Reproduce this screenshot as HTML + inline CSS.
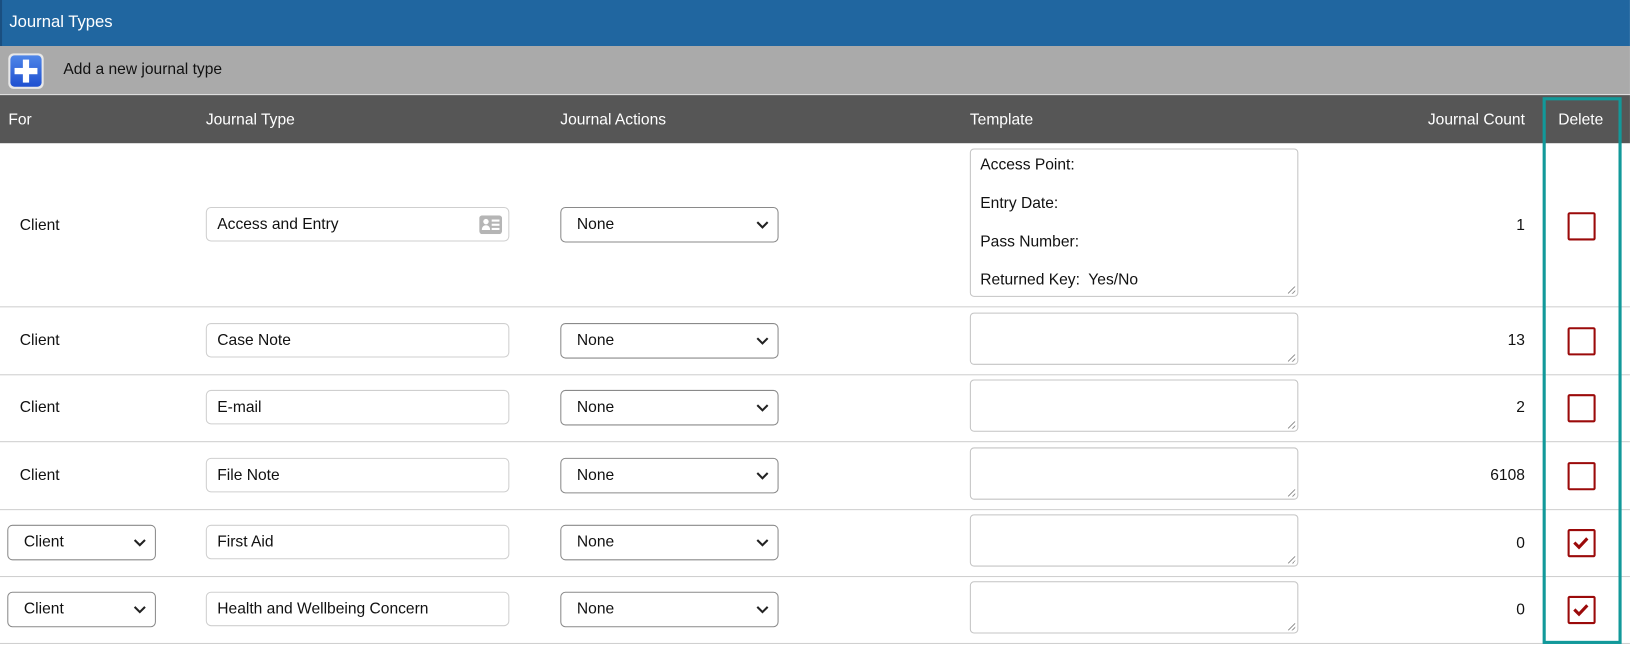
<!DOCTYPE html>
<html><head><meta charset="utf-8"><style>
html,body{margin:0;padding:0;width:1630px;height:645px;overflow:hidden;background:#fff;font-family:"Liberation Sans",Arial,sans-serif;}
#w{position:absolute;left:0;top:0;width:1568px;height:617px;transform-origin:0 0;transform:scale(1.0395,1.0454);}
.a{position:absolute;}
.t{font-size:15px;color:#111;}
.hd{color:#fff;font-size:15px;}
.inp{position:absolute;left:198px;width:292px;height:33px;border:1px solid #cfcfcf;border-radius:5px;box-sizing:border-box;font-size:15px;line-height:31px;padding-left:10px;color:#111;}
.sel{position:absolute;height:34px;border:1px solid #8a8a8a;border-radius:5px;box-sizing:border-box;font-size:15px;line-height:32px;padding-left:15px;color:#111;}
.sel svg{position:absolute;right:8px;top:12px;}
.ta{position:absolute;left:933px;width:316px;border:1px solid #c4c4c4;border-radius:4px;box-sizing:border-box;}
.ta:after{content:"";position:absolute;right:2px;bottom:2px;width:7px;height:7px;background:linear-gradient(135deg,transparent 45%,#999 45%,#999 55%,transparent 55%,transparent 75%,#999 75%,#999 85%,transparent 85%);}
.line{position:absolute;left:0;width:1568px;height:1px;background:#cfcfcf;}
.cnt{position:absolute;right:101px;font-size:15px;color:#111;}
.cb{position:absolute;left:1508px;width:27px;height:27px;border:2.5px solid #9b0a0a;border-radius:2px;box-sizing:border-box;}
</style></head><body><div id="w">
<div class="a" style="left:0;top:0;width:1568px;height:44px;background:#2066a0;"></div>
<div class="a" style="left:0;top:0;width:2px;height:44px;background:#1a4f80;"></div>
<div class="a hd" style="left:9px;top:13px;font-size:16px;">Journal Types</div>
<div class="a" style="left:0;top:44px;width:1568px;height:46px;background:#aaaaaa;"></div>
<div class="a" style="left:8px;top:51px;width:34px;height:34px;border-radius:5px;background:#e8e8e8;"></div>
<div class="a" style="left:10px;top:53px;width:30px;height:30px;border-radius:4px;background:linear-gradient(#4f86e8,#1e4fd0);"></div>
<div class="a" style="left:22px;top:57px;width:6px;height:22px;background:#fff;"></div>
<div class="a" style="left:14px;top:65px;width:22px;height:6px;background:#fff;"></div>
<div class="a t" style="left:61px;top:58px;">Add a new journal type</div>
<div class="a" style="left:0;top:90px;width:1568px;height:1px;background:#ddd;"></div>
<div class="a" style="left:0;top:91px;width:1568px;height:46px;background:#565656;"></div>
<div class="a hd" style="left:8px;top:106px;">For</div>
<div class="a hd" style="left:198px;top:106px;">Journal Type</div>
<div class="a hd" style="left:539px;top:106px;">Journal Actions</div>
<div class="a hd" style="left:933px;top:106px;">Template</div>
<div class="a hd" style="right:101px;top:106px;">Journal Count</div>
<div class="a hd" style="left:1499px;top:106px;">Delete</div>

<!-- row 1 -->
<div class="a t" style="left:19px;top:207px;">Client</div>
<div class="inp" style="top:198px;">Access and Entry
<svg style="position:absolute;right:6px;top:7px" width="22" height="18" viewBox="0 0 22 18"><rect width="22" height="18" rx="3" fill="#b5b5b5"/><circle cx="6.5" cy="6" r="2.6" fill="#fff"/><path d="M2.5 14c0-3 2-4.5 4-4.5s4 1.5 4 4.5z" fill="#fff"/><rect x="12" y="4" width="7.5" height="2" fill="#fff"/><rect x="12" y="8" width="7.5" height="2" fill="#fff"/><rect x="12" y="12" width="7.5" height="2" fill="#fff"/></svg></div>
<div class="sel" style="left:539px;top:198px;width:210px;">None<svg width="13" height="9" viewBox="0 0 13 9"><path d="M1.5 1.5l5 5 5-5" fill="none" stroke="#222" stroke-width="2"/></svg></div>
<div class="ta" style="top:142px;height:142px;"></div>
<div class="a t" style="left:943px;top:149px;">Access Point:</div>
<div class="a t" style="left:943px;top:186px;">Entry Date:</div>
<div class="a t" style="left:943px;top:223px;">Pass Number:</div>
<div class="a t" style="left:943px;top:259px;">Returned Key:&nbsp; Yes/No</div>
<div class="cnt" style="top:207px;">1</div>
<div class="cb" style="top:203px;"></div>
<div class="line" style="top:293px;"></div>

<!-- row 2 -->
<div class="a t" style="left:19px;top:317px;">Client</div>
<div class="inp" style="top:309px;">Case Note</div>
<div class="sel" style="left:539px;top:309px;width:210px;">None<svg width="13" height="9" viewBox="0 0 13 9"><path d="M1.5 1.5l5 5 5-5" fill="none" stroke="#222" stroke-width="2"/></svg></div>
<div class="ta" style="top:299px;height:50px;"></div>
<div class="cnt" style="top:317px;">13</div>
<div class="cb" style="top:313px;"></div>
<div class="line" style="top:358px;"></div>

<!-- row 3 -->
<div class="a t" style="left:19px;top:381px;">Client</div>
<div class="inp" style="top:373px;">E-mail</div>
<div class="sel" style="left:539px;top:373px;width:210px;">None<svg width="13" height="9" viewBox="0 0 13 9"><path d="M1.5 1.5l5 5 5-5" fill="none" stroke="#222" stroke-width="2"/></svg></div>
<div class="ta" style="top:363px;height:50px;"></div>
<div class="cnt" style="top:381px;">2</div>
<div class="cb" style="top:377px;"></div>
<div class="line" style="top:422px;"></div>

<!-- row 4 -->
<div class="a t" style="left:19px;top:446px;">Client</div>
<div class="inp" style="top:438px;">File Note</div>
<div class="sel" style="left:539px;top:438px;width:210px;">None<svg width="13" height="9" viewBox="0 0 13 9"><path d="M1.5 1.5l5 5 5-5" fill="none" stroke="#222" stroke-width="2"/></svg></div>
<div class="ta" style="top:428px;height:50px;"></div>
<div class="cnt" style="top:446px;">6108</div>
<div class="cb" style="top:442px;"></div>
<div class="line" style="top:487px;"></div>

<!-- row 5 -->
<div class="sel" style="left:7px;top:502px;width:143px;">Client<svg width="13" height="9" viewBox="0 0 13 9"><path d="M1.5 1.5l5 5 5-5" fill="none" stroke="#222" stroke-width="2"/></svg></div>
<div class="inp" style="top:502px;">First Aid</div>
<div class="sel" style="left:539px;top:502px;width:210px;">None<svg width="13" height="9" viewBox="0 0 13 9"><path d="M1.5 1.5l5 5 5-5" fill="none" stroke="#222" stroke-width="2"/></svg></div>
<div class="ta" style="top:492px;height:50px;"></div>
<div class="cnt" style="top:511px;">0</div>
<div class="cb" style="top:506px;"><svg width="22" height="22" viewBox="0 0 22 22" style="position:absolute;left:0;top:0"><path d="M4.5 11l4.5 4.5 8-8.5" fill="none" stroke="#9b0a0a" stroke-width="3"/></svg></div>
<div class="line" style="top:551px;"></div>

<!-- row 6 -->
<div class="sel" style="left:7px;top:566px;width:143px;">Client<svg width="13" height="9" viewBox="0 0 13 9"><path d="M1.5 1.5l5 5 5-5" fill="none" stroke="#222" stroke-width="2"/></svg></div>
<div class="inp" style="top:566px;">Health and Wellbeing Concern</div>
<div class="sel" style="left:539px;top:566px;width:210px;">None<svg width="13" height="9" viewBox="0 0 13 9"><path d="M1.5 1.5l5 5 5-5" fill="none" stroke="#222" stroke-width="2"/></svg></div>
<div class="ta" style="top:556px;height:50px;"></div>
<div class="cnt" style="top:575px;">0</div>
<div class="cb" style="top:570px;"><svg width="22" height="22" viewBox="0 0 22 22" style="position:absolute;left:0;top:0"><path d="M4.5 11l4.5 4.5 8-8.5" fill="none" stroke="#9b0a0a" stroke-width="3"/></svg></div>
<div class="line" style="top:615px;"></div>

<div class="a" style="left:1484px;top:93px;width:76px;height:523px;border:3px solid #12999a;box-sizing:border-box;"></div>
</div></body></html>
